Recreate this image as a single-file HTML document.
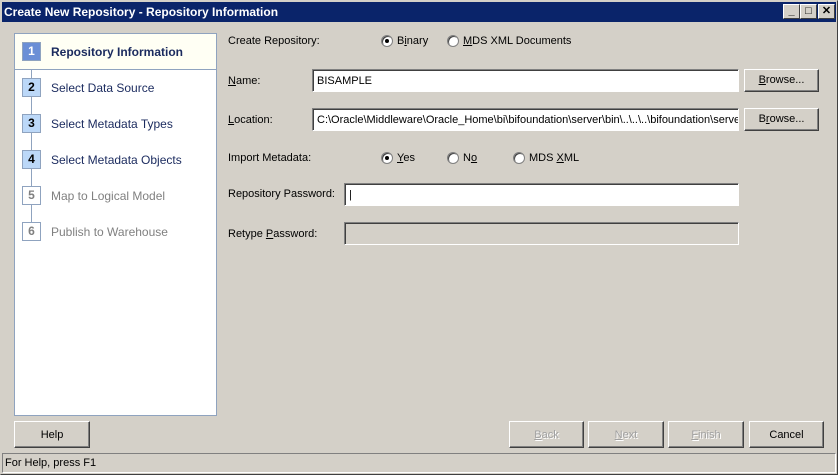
<!DOCTYPE html>
<html><head><style>
*{box-sizing:border-box;margin:0;padding:0}
body{width:838px;height:475px;background:#d4d0c8;font-family:"Liberation Sans",sans-serif;font-size:11px;color:#000;position:relative;overflow:hidden}
.abs{position:absolute}
.win{left:0;top:0;width:838px;height:475px;border:1px solid #404040;border-top-color:#d4d0c8;border-left-color:#d4d0c8}
.title{left:2px;top:2px;width:834px;height:20px;background:#0a246a;color:#fff;font-weight:bold;font-size:12px;line-height:20px;padding-left:2px}
.tb{top:4px;width:17px;height:15px;background:#d4d0c8;border:1px solid;border-color:#fff #404040 #404040 #fff;font-size:11px;line-height:13px;text-align:center;color:#000;font-weight:bold}
.panel{left:14px;top:33px;width:203px;height:383px;background:#fff;border:1px solid #8fa3bf}
.row{position:absolute;left:0;width:201px;height:36px}
.num{position:absolute;left:7px;top:8px;width:19px;height:19px;border:1px solid #8fa3bf;background:#bcd8f8;text-align:center;line-height:17px;font-weight:bold;font-size:12px;color:#000}
.lbl{position:absolute;left:36px;top:11px;font-size:12px;color:#1a2a5e}
.line{position:absolute;left:16px;width:1px;background:#8fa3bf}
.in{height:23px;background:#fff;border:1px solid;border-color:#808080 #fff #fff #808080;box-shadow:inset 1px 1px 0 #404040;padding:5px 4px;white-space:nowrap;overflow:hidden}
.btn{height:27px;border:1px solid;border-color:#fff #404040 #404040 #fff;box-shadow:inset -1px -1px 0 #808080;text-align:center;line-height:27px;font-size:11px}
.dis{color:#a0a0a0;text-shadow:1px 1px 0 #fff}
.radio{width:12px;height:12px;border-radius:50%;background:#fff;border:1px solid #808080;box-shadow:inset 1px 1px 0 #404040}
.dot::after{content:"";position:absolute;left:3px;top:3px;width:4px;height:4px;border-radius:50%;background:#000}
u{text-decoration:underline}
</style></head><body>
<div class="abs win"></div>
<div class="abs title">Create New Repository - Repository Information</div>
<div class="abs tb" style="left:783px">_</div>
<div class="abs tb" style="left:800px">□</div>
<div class="abs tb" style="left:818px">✕</div>

<div class="abs panel">
 <div class="line" style="top:26px;height:180px"></div>
 <div class="row" style="top:0;background:#fffff4;border-bottom:1px solid #8fa3bf"><div class="num" style="background:#6b8fd6;color:#fff">1</div><div class="lbl" style="font-weight:bold">Repository Information</div></div>
 <div class="row" style="top:36px"><div class="num">2</div><div class="lbl">Select Data Source</div></div>
 <div class="row" style="top:72px"><div class="num">3</div><div class="lbl">Select Metadata Types</div></div>
 <div class="row" style="top:108px"><div class="num">4</div><div class="lbl">Select Metadata Objects</div></div>
 <div class="row" style="top:144px"><div class="num" style="background:#fff;color:#808080">5</div><div class="lbl" style="color:#808080">Map to Logical Model</div></div>
 <div class="row" style="top:180px"><div class="num" style="background:#fff;color:#808080">6</div><div class="lbl" style="color:#808080">Publish to Warehouse</div></div>
</div>

<div class="abs" style="left:228px;top:35px">Create Repository:</div>
<div class="abs radio dot" style="left:381px;top:35px"></div><div class="abs" style="left:397px;top:35px">B<u>i</u>nary</div>
<div class="abs radio" style="left:447px;top:35px"></div><div class="abs" style="left:463px;top:35px"><u>M</u>DS XML Documents</div>

<div class="abs" style="left:228px;top:75px"><u>N</u>ame:</div>
<div class="abs in" style="left:312px;top:69px;width:427px">BISAMPLE</div>
<div class="abs btn" style="left:744px;top:69px;width:75px;height:23px;line-height:21px"><u>B</u>rowse...</div>

<div class="abs" style="left:228px;top:114px"><u>L</u>ocation:</div>
<div class="abs in" style="left:312px;top:108px;width:427px">C:\Oracle\Middleware\Oracle_Home\bi\bifoundation\server\bin\..\..\..\bifoundation\server</div>
<div class="abs btn" style="left:744px;top:108px;width:75px;height:23px;line-height:21px">B<u>r</u>owse...</div>

<div class="abs" style="left:228px;top:152px">Import Metadata:</div>
<div class="abs radio dot" style="left:381px;top:152px"></div><div class="abs" style="left:397px;top:152px"><u>Y</u>es</div>
<div class="abs radio" style="left:447px;top:152px"></div><div class="abs" style="left:463px;top:152px">N<u>o</u></div>
<div class="abs radio" style="left:513px;top:152px"></div><div class="abs" style="left:529px;top:152px">MDS <u>X</u>ML</div>

<div class="abs" style="left:228px;top:188px">Repository Password:</div>
<div class="abs in" style="left:344px;top:183px;width:395px">|</div>
<div class="abs" style="left:228px;top:228px">Retype <u>P</u>assword:</div>
<div class="abs in" style="left:344px;top:222px;width:395px;background:#d4d0c8"></div>

<div class="abs btn" style="left:14px;top:421px;width:76px">Help</div>
<div class="abs btn dis" style="left:509px;top:421px;width:75px"><u>B</u>ack</div>
<div class="abs btn dis" style="left:588px;top:421px;width:76px"><u>N</u>ext</div>
<div class="abs btn dis" style="left:668px;top:421px;width:76px"><u>F</u>inish</div>
<div class="abs btn" style="left:749px;top:421px;width:75px">Cancel</div>

<div class="abs" style="left:2px;top:453px;width:834px;height:20px;border:1px solid;border-color:#808080 #fff #fff #808080;padding:3px 2px">For Help, press F1</div>
</body></html>
